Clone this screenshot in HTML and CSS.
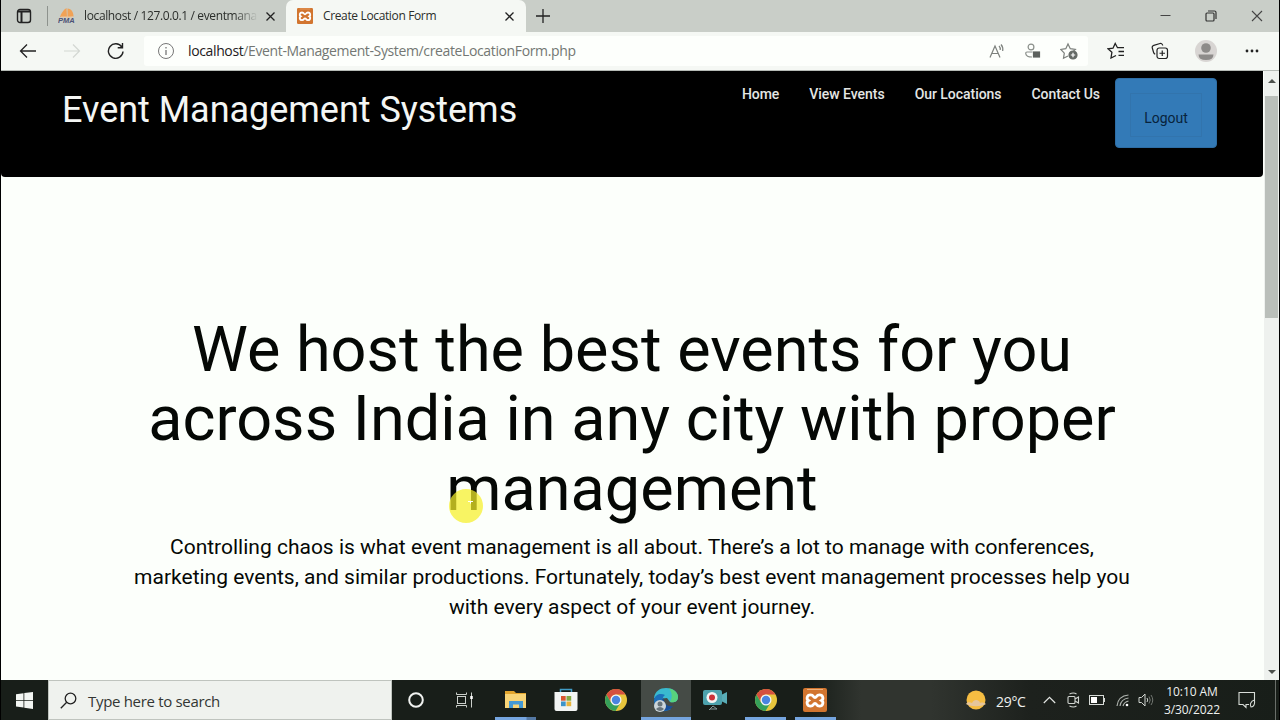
FILE: index.html
```html
<!DOCTYPE html>
<html lang="en">
<head>
<meta charset="utf-8">
<title>Create Location Form</title>
<link rel="stylesheet" href="styles.css">
</head>
<body>
<svg class="defs" width="0" height="0">
  <symbol id="xampp" viewBox="0 0 24 24"><rect width="24" height="24" rx="2" fill="#d2752f"/><path d="M4 1.500h16" stroke="#eeb07a" stroke-width="1"/><path d="M7.500 6.800c3.500 0 2.500 2.700 4.500 2.700s1-2.700 4.500-2.700 4.500 4.200 2 5.700c2.500 1.500 1.500 5.700-2 5.700s-2.500-2.700-4.500-2.700-1 2.700-4.500 2.700-4.500-4.200-2-5.700c-2.500-1.500-1.500-5.700 2-5.700z" fill="none" stroke="#fff" stroke-width="2.800"/></symbol>
  <symbol id="chrome" viewBox="0 0 24 24"><circle cx="12" cy="12" r="11" fill="#e8c53c"/><path d="M7.200 14.800 2.500 6.500A11 11 0 0 0 11.500 23l5-8.300z" fill="#35a05a"/><path d="M2.500 6.500A11 11 0 0 1 21.500 6.500H12A5.500 5.500 0 0 0 7.200 14.800z" fill="#d5503f"/><circle cx="12" cy="12" r="5.500" fill="#f3f6f4"/><circle cx="12" cy="12" r="4.200" fill="#4a84e0"/></symbol>
</svg>
<div class="screen">
  <header class="tabs">
    <svg class="tab-menu" width="16" height="16" viewBox="0 0 16 16" fill="none" stroke="#222" stroke-width="1.400"><rect x="1.500" y="1.500" width="13" height="13" rx="2.500"/><path d="M2 3.500h12M5.500 4v10" stroke-width="2"/></svg>
    <div class="tab-sep"></div>
    <div class="tab tab-idle">
      <svg class="pma" width="18" height="16" viewBox="0 0 18 16"><path d="M2 9C3 6 5 2 8.500 0l.5 9zM9.500.5c4 0 6 4 6 8l-6 1z" fill="#f0a257"/><path d="M3 8.500h12v1H3z" fill="#e8c6a4"/><text x="0" y="15" class="pma-text">PMA</text></svg>
      <span class="tab-title idle-title">localhost / 127.0.0.1 / eventmana</span>
      <svg width="9" height="9" viewBox="0 0 9 9" stroke="#222" stroke-width="1.300"><path d="M.5.5l8 8M8.500.5l-8 8"/></svg>
    </div>
    <div class="tab tab-active">
      <svg width="16" height="16"><use href="#xampp"/></svg>
      <span class="tab-title active-title">Create Location Form</span>
      <svg width="9" height="9" viewBox="0 0 9 9" stroke="#222" stroke-width="1.300"><path d="M.5.5l8 8M8.500.5l-8 8"/></svg>
    </div>
    <svg class="new-tab" width="14" height="14" viewBox="0 0 14 14" stroke="#222" stroke-width="1.300"><path d="M7 0v14M0 7h14"/></svg>
    <div class="window-buttons">
      <svg width="11" height="12" viewBox="0 0 11 12" stroke="#444" stroke-width="1"><path d="M.5 5.500h10"/></svg>
      <svg width="12" height="12" viewBox="0 0 12 12" fill="none" stroke="#333" stroke-width="1.200"><rect x="1" y="3" width="8" height="8" rx="1"/><path d="M3 1h6.500a1.500 1.500 0 0 1 1.500 1.500V9"/></svg>
      <svg width="12" height="12" viewBox="0 0 12 12" stroke="#444" stroke-width="1.100"><path d="M1 1l10 10M11 1L1 11"/></svg>
    </div>
  </header>
  <div class="toolbar">
    <svg class="back" width="18" height="16" viewBox="0 0 18 16" fill="none" stroke="#222" stroke-width="1.300"><path d="M17 8H1.500M8 1.500L1.500 8 8 14.500"/></svg>
    <svg class="forward" width="18" height="16" viewBox="0 0 18 16" fill="none" stroke="#d3d7d2" stroke-width="1.200"><path d="M1 8h15.500M10 1.500L16.500 8 10 14.500"/></svg>
    <svg class="reload" width="18" height="18" viewBox="0 0 18 18" fill="none" stroke="#222" stroke-width="1.400"><path d="M16 9.500A7.300 7.300 0 1 1 14.800 5M15.500 1v4.800h-4.800"/></svg>
    <div class="address">
      <svg width="18" height="18" viewBox="0 0 18 18" fill="none" stroke="#777" stroke-width="1"><circle cx="9" cy="9" r="7.500"/><path d="M9 8v5M9 5v1.500" stroke-width="1.300"/></svg>
      <span class="url"><b>localhost</b>/Event-Management-System/createLocationForm.php</span>
      <div class="address-icons">
        <svg width="17" height="16" viewBox="0 0 17 16" fill="none" stroke="#7d817d" stroke-width="1.200"><path d="M1 14.500L6 3l5 11.500M3 10.500h6M10 3c1 1 1.500 2.500 1.200 4M12 1.500c1.700 2 2.200 4 1.700 6.500"/></svg>
        <svg width="16" height="16" viewBox="0 0 16 16" fill="none" stroke="#8b908b" stroke-width="1.200"><circle cx="6" cy="4" r="2.900"/><path d="M7.500 9H2a1.300 1.300 0 0 0-1.300 1.300C.7 13 3.500 14 7 14"/><rect x="8.500" y="9" width="6" height="5" fill="#5d625e" stroke="#5d625e"/></svg>
        <svg width="18" height="18" viewBox="0 0 18 18" fill="none" stroke="#7d817d" stroke-width="1.200"><path d="M8 14l-4.500 2.300.8-5.200L.8 7.500l5-.8L8 2l2.300 4.700 5 .8L13.500 9"/><circle cx="13" cy="13" r="4" fill="#656a66" stroke="#656a66"/><path d="M10.800 13h4.400M13 10.800v4.400" stroke="#fff"/></svg>
      </div>
    </div>
    <svg class="favorites" width="18" height="17" viewBox="0 0 18 17" fill="none" stroke="#222" stroke-width="1.300"><path d="M9 13.500l-5 2.500.9-5.700L1 6.800l5-.6L8.200 1.500l2.300 4.200H17M11.500 9.500H17M11.500 13.300H17"/></svg>
    <svg class="collections" width="18" height="18" viewBox="0 0 18 18" fill="none" stroke="#222" stroke-width="1.200"><rect x="6" y="6" width="10.500" height="10.500" rx="2.200"/><path d="M11.250 8.500v5.500M8.500 11.250H14M4.200 12.300Q3 11.800 2.600 10.500L1.300 6a2.200 2.200 0 0 1 1.500-2.700L9 1.500A2.200 2.200 0 0 1 11.700 3.500"/></svg>
    <svg class="avatar" width="22" height="22" viewBox="0 0 22 22"><circle cx="11" cy="11" r="11" fill="#d8d5d3"/><circle cx="11" cy="8" r="4.800" fill="#8d8b89"/><path d="M3.500 14.500h15q0 5.500-7.500 5.500t-7.500-5.500" fill="#8d8b89"/></svg>
    <svg class="more" width="14" height="4" viewBox="0 0 14 4" fill="#222"><circle cx="2" cy="2" r="1.400"/><circle cx="7" cy="2" r="1.400"/><circle cx="12" cy="2" r="1.400"/></svg>
  </div>
  <div class="viewport">
    <main class="page">
      <nav class="navbar">
        <h1 class="brand">Event Management Systems</h1>
        <ul class="links">
          <li>Home</li><li>View Events</li><li>Our Locations</li><li>Contact Us</li>
        </ul>
        <div class="logout"><span class="logout-inner">Logout</span></div>
      </nav>
      <section class="hero">
        <h2 class="hero-title">We host the best events for you<br>across India in any city with proper<br>management</h2>
        <p class="hero-text">Controlling chaos is what event management is all about. There’s a lot to manage with conferences,<br>marketing events, and similar productions. Fortunately, today’s best event management processes help you<br>with every aspect of your event journey.</p>
      </section>
      <div class="cursor"><svg width="8" height="8" viewBox="0 0 8 8"><path d="M1 1.500h5M3.500 1.500v2" stroke="#fff" stroke-width="1" fill="none"/></svg></div>
    </main>
    <div class="scrollbar">
      <svg width="8" height="5" viewBox="0 0 8 5"><path d="M0 5l4-4 4 4z" fill="#4c504c"/></svg>
      <div class="thumb"></div>
      <svg class="down" width="8" height="5" viewBox="0 0 8 5"><path d="M0 0l4 4 4-4z" fill="#4c504c"/></svg>
    </div>
  </div>
  <footer class="taskbar">
    <div class="start"><svg width="17" height="17" viewBox="0 0 17 17" fill="#f2f5f2"><path d="M0 2.300L7.500 1.200V8H0zM8.300 1.100L17 0v8H8.300zM0 8.800h7.500v6.800L0 14.500zM8.300 8.800H17V17l-8.700-1.200z"/></svg></div>
    <div class="search">
      <svg width="17" height="17" viewBox="0 0 17 17" fill="none" stroke="#222" stroke-width="1.300"><circle cx="10.500" cy="6.500" r="5.300"/><path d="M6.700 10.300L.8 16.200"/></svg>
      <span class="search-text">Type here to search</span>
    </div>
    <div class="apps">
      <div class="app"><svg width="18" height="18" viewBox="0 0 18 18"><circle cx="9" cy="9" r="6.800" fill="none" stroke="#f0f2f0" stroke-width="2"/></svg></div>
      <div class="app"><svg class="task-view" width="18" height="18" viewBox="0 0 18 18" fill="none" stroke="#cbd0cb" stroke-width="1"><rect x="2.500" y="5.500" width="8" height="7"/><path d="M1.500 1.500v2h10v-2M1.500 16.500v-2h10v2M16.500 1.500v15"/><path d="M16.500 5v3" stroke-width="2.500" stroke="#fff"/></svg></div>
      <div class="app running split"><svg width="24" height="20" viewBox="0 0 24 20"><path d="M1 1h9l2 2h10v14H1z" fill="#e2a52e"/><path d="M1 4h21v14H1z" fill="#f8d477"/><path d="M5 18v-7h14v7h-4v-3.500H9V18z" fill="#4499d4"/></svg></div>
      <div class="app"><svg width="24" height="24" viewBox="0 0 24 24"><path d="M6.500 5V1.500h11V5" fill="none" stroke="#419dc7" stroke-width="1.500"/><path d="M.5 4h23v17a2 2 0 0 1-2 2h-19a2 2 0 0 1-2-2z" fill="#f2f4f3"/><path d="M7 8h4.700v4.700H7z" fill="#d95530"/><path d="M12.500 8h4.700v4.700h-4.700z" fill="#83a943"/><path d="M7 13.500h4.700v4.700H7z" fill="#3e94c9"/><path d="M12.500 13.500h4.700v4.700h-4.700z" fill="#e8b43c"/></svg></div>
      <div class="app"><svg width="24" height="24"><use href="#chrome"/></svg></div>
      <div class="app running current"><svg width="26" height="24" viewBox="0 0 26 24"><path d="M1 10C2 3 7 0 13 0c8 0 12 5 12 9 0 5-5 6-8 5l-3-4-9 1z" fill="#39b9cf"/><path d="M16 .5c6 1 9 5 9 8.500 0 5-5 6-8 5 2-4 3-8-1-13.500z" fill="#58d27d"/><path d="M1 12c1-6 7-7 11-5-4 3-3 9 1 12l5 2c-8 5-17 1-17-9z" fill="#1b6fba"/><path d="M11 10c-1 6 4 9 9 8-4 6-13 6-16 0z" fill="#174e9a"/><circle cx="7" cy="18" r="6" fill="#cbd5da"/><circle cx="7" cy="16" r="2.500" fill="#67747b"/><path d="M3 21q4-4 8 0-4 4-8 0" fill="#67747b"/></svg></div>
      <div class="app"><svg width="25" height="22" viewBox="0 0 25 22"><path d="M18 6l6-3v12l-6-3z" fill="#59adb7"/><rect y="1" width="19" height="15" rx="2" fill="#4da2ad"/><circle cx="9" cy="8.500" r="5.500" fill="#f3f5f4"/><circle cx="9" cy="8.500" r="3" fill="#cc3239"/><path d="M6 21l4-4 4 3M7 20h7" fill="none" stroke="#84979b"/></svg></div>
      <div class="app running"><svg width="24" height="24"><use href="#chrome"/></svg></div>
      <div class="app running"><svg width="24" height="24"><use href="#xampp"/></svg></div>
    </div>
    <div class="tray">
      <svg class="weather" width="22" height="20" viewBox="0 0 22 20"><circle cx="11" cy="10" r="9.500" fill="#f6bd42"/><path d="M1 14c1-2 4-2 6-1 2-5 8-3 8 0 2-1 5 0 6 1-5 3-15 3-20 0z" fill="#e6c69b"/></svg>
      <span class="temp">29°C</span>
      <svg class="chevron" width="13" height="8" viewBox="0 0 13 8" fill="none" stroke="#e3e6e3" stroke-width="1.200"><path d="M.8 7l5.700-5.700L12.200 7"/></svg>
      <svg class="meet" width="13" height="16" viewBox="0 0 13 16" fill="none" stroke="#cfd3cf" stroke-width="1.100"><rect x="1" y="4.500" width="7" height="7" rx="1"/><path d="M8 7l3.500-2v6L8 9M2.500 2q4-2 7 0M2.500 14q4 2 7 0"/></svg>
      <svg class="battery" width="16" height="10" viewBox="0 0 16 10"><rect x=".5" y=".5" width="14" height="9" fill="none" stroke="#d6dad6"/><path d="M2 2h6v6H2z" fill="#fff"/><path d="M15.500 3v4" stroke="#d6dad6"/></svg>
      <svg class="wifi" width="14" height="13" viewBox="0 0 14 13" fill="none" stroke="#aeb3ae" stroke-width="1.200"><path d="M1 12Q2 2 12.500 1M4 12q1-7 8.500-8M7 12q1-4 5.500-5"/><circle cx="11" cy="11" r="1.300" fill="#fff" stroke="none"/></svg>
      <svg class="sound" width="16" height="14" viewBox="0 0 16 14" fill="none" stroke="#d1d5d1" stroke-width="1"><path d="M1 4.500h2.500L7 1v12L3.500 9.500H1z"/><path d="M9 5q1.500 2 0 4"/><path d="M11 3.500q2.500 3.500 0 7M13 2q3.500 5 0 10" stroke="#737873"/></svg>
      <div class="clock"><span class="time">10:10 AM</span><span class="date">3/30/2022</span></div>
      <svg class="notice" width="18" height="18" viewBox="0 0 18 18" fill="none" stroke="#d8dcd8" stroke-width="1.100"><path d="M16.500 9V1.500H1v12h4l3 3v-3h3M16.500 9c-4 1-5 5-3.500 7 3 0 4-3 3.500-7z"/></svg>
      <div class="peek"></div>
    </div>
  </footer>
</div>
</body>
</html>
```
FILE: styles.css
```css
* { box-sizing: border-box; }
body { margin: 0; background: #000; font-family: "Open Sans", "Noto Sans", sans-serif; }
svg { display: block; flex: none; }
.defs { position: absolute; }
.screen { width: 1280px; height: 720px; overflow: hidden; padding: 0 1px; display: flex; flex-direction: column; background: #000; white-space: nowrap; }

.tabs { height: 32px; background: #c9cec8; display: flex; align-items: center; }
.tab-menu { margin-left: 15px; }
.tab-sep { width: 1px; height: 20px; margin-left: 15px; background: #8d928d; }
.tab { display: flex; align-items: center; height: 32px; color: #2b2e2b; font-size: 12px; }
.tab-idle { width: 238px; padding-left: 10px; }
.pma-text { font: italic bold 7.500px "Liberation Sans", sans-serif; fill: #4d5275; }
.tab-title { line-height: 18px; }
.idle-title { width: 174px; margin: 0 8px 0 8px; letter-spacing: -0.37px; -webkit-mask-image: linear-gradient(90deg, #000 150px, transparent 174px); mask-image: linear-gradient(90deg, #000 150px, transparent 174px); }
.tab-active { width: 240px; padding-left: 11px; border-radius: 7px 7px 0 0; background: #f5f8f4; }
.active-title { width: 182px; margin-left: 10px; letter-spacing: -0.36px; }
.new-tab { margin-left: 10px; }
.window-buttons { margin: 0 16px 0 auto; display: flex; align-items: center; gap: 34px; }

.toolbar { height: 39px; background: #f5f8f4; border-bottom: 1px solid #b5bab5; display: flex; align-items: center; padding-bottom: 1px; }
.back { margin-left: 18px; }
.forward { margin-left: 26px; }
.reload { margin-left: 26px; }
.address { width: 944px; height: 30px; margin-left: 19px; padding: 0 10px 0 13px; border-radius: 3px; background: #fdfffc; display: flex; align-items: center; }
.url { margin-left: 13px; font-size: 14px; line-height: 20px; letter-spacing: -0.37px; color: #737773; }
.url b { font-weight: 400; color: #1d201d; }
.address-icons { margin-left: auto; display: flex; align-items: center; gap: 19px; }
.favorites { margin-left: 19px; }
.collections { margin-left: 26px; }
.avatar { margin-left: 26px; }
.more { margin-left: 28px; }

.viewport { height: 609px; display: flex; background: #fcfffb; }
.page { position: relative; width: 1263px; font-family: Roboto, sans-serif; color: #050805; }
.navbar { height: 106px; margin-right: 1px; padding: 7px 46px 0 61px; display: flex; align-items: flex-start; background: #000; border-radius: 0 0 4px 4px; }
.brand { margin: 12px 0 0; font-size: 36px; line-height: 40px; font-weight: 400; letter-spacing: -0.03px; color: #f4f6f4; }
.links { margin: 6px 15px 0 auto; padding: 0; display: flex; gap: 30px; list-style: none; font-size: 14px; line-height: 20px; font-weight: 500; letter-spacing: -0.04px; color: #e4e6e4; }
.logout { width: 102px; height: 70px; padding: 15px 14px; border-radius: 4px; background: #337ab7; border: 1px solid #2e6da4; }
.logout-inner { display: block; height: 44px; padding-top: 14px; font-size: 14px; line-height: 20px; text-align: center; color: #08233c; border: 1px solid #3274ad; margin-top: -1px; }
.hero { padding: 138px 1px 0 0; text-align: center; }
.hero-title { margin: 0; font-size: 63px; line-height: 69.3px; font-weight: 400; }
.hero-text { margin: 9px 0 0; font-size: 21px; line-height: 30px; }
.cursor { position: absolute; left: 448px; top: 418px; width: 34px; height: 34px; border-radius: 50%; background: rgba(247, 240, 40, .72); padding: 11px 0 0 18px; }
.scrollbar { width: 15px; background: #eef1ee; display: flex; flex-direction: column; align-items: center; padding: 7px 0 5px; }
.thumb { width: 13px; height: 222px; margin-top: 13px; background: #babfba; }
.down { margin-top: auto; }

.taskbar { height: 40px; background: linear-gradient(90deg, #181e19 0 810px, #30342f 860px, #30342f 930px, #1d211d 1030px, #181e19); display: flex; color: #eff1ef; }
.start { width: 47px; display: flex; align-items: center; justify-content: center; }
.search { width: 344px; background: #eff2ee; border: 1px solid #bfc4be; display: flex; align-items: center; padding-left: 11px; color: #333633; }
.search-text { margin-left: 11px; padding-top: 2px; font-size: 15px; line-height: 22px; letter-spacing: -0.32px; }
.apps { display: flex; margin-left: -1px; }
.app { width: 49.95px; height: 40px; display: flex; align-items: center; justify-content: center; }
.task-view { margin-right: 4px; }
.running { background: linear-gradient(#75a5df, #75a5df) 50% 100% / 41px 3px no-repeat; }
.split { background: linear-gradient(90deg, #75a5df 31px, #5478a3 32px) 50% 100% / 41px 3px no-repeat; }
.current { background: linear-gradient(#75a5df, #75a5df) 0 100% / 50px 3px no-repeat #454b46; }
.tray { margin-left: auto; display: flex; align-items: center; }
.temp { width: 30px; margin-left: 9px; padding-top: 2px; font-size: 14px; letter-spacing: -0.3px; }
.chevron { margin-left: 17px; }
.meet { margin-left: 11px; }
.battery { margin-left: 9px; }
.wifi { margin-left: 11px; }
.sound { margin-left: 8px; }
.clock { width: 66px; margin-left: 5px; padding-top: 2px; display: flex; flex-direction: column; text-align: center; font-size: 12px; line-height: 18px; letter-spacing: -0.1px; }
.notice { margin-left: 13px; }
.peek { width: 1px; height: 40px; margin: 0 3px 0 19px; background: #6a6f6a; }
```
